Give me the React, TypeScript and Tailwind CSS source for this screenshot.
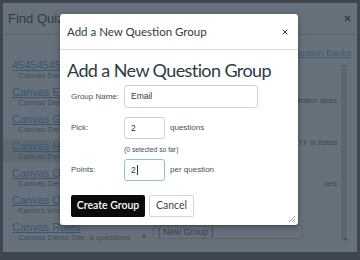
import { X } from 'lucide-react';

const rows = [
  { title: '454545454', sub: 'Canvas Demo Site, 4 questions' },
  { title: 'Canvas Email', sub: 'Canvas Demo Site, 6 questions' },
  { title: 'Canvas Grades', sub: 'Canvas Demo Site, 5 questions' },
  { title: 'Canvas Help', sub: 'Canvas Demo Site, 3 questions', active: true },
  { title: 'Canvas Quizzes', sub: 'Canvas Demo Site, 7 questions' },
  { title: 'Canvas Quizzes', sub: "Karen's Workspace, 2 questions" },
  { title: 'Canvas Roles', sub: 'Canvas Demo Site, 8 questions', last: true },
];

function Backdrop() {
  return (
    <div className="absolute inset-[3px] bottom-[8px] bg-[#67717c] text-[#2f3b48]">
      <div className="flex h-[32px] items-center justify-between border-b border-[#5a636d] px-[5px]">
        <span className="text-[13px]">Find Quiz Group</span>
        <X className="h-[9px] w-[9px] text-[#2f3742]" strokeWidth={3} />
      </div>
      <div className="absolute right-[6px] top-[44px] text-[9px] text-[#3f5a78] underline">Question Banks</div>
      <div className="absolute right-[20px] top-[92px] text-[8px] text-[#3c4650]">editor does</div>
      <div className="absolute right-[20px] top-[134px] text-[8px] text-[#3c4650]">TF is listed</div>
      <div className="absolute right-[20px] top-[175px] text-[8px] text-[#3c4650]">oes</div>
      <div className="absolute right-[10px] top-[62px] h-[175px] w-[6px] bg-[#5d666f]" />
      <div className="absolute left-[150px] top-[222px] h-[14px] w-[150px] rounded-[2px] border border-[#5a636d] px-[4px] text-[9px] leading-[12px] text-[#3c4650]">[ New Group ]</div>
      <div className="absolute left-[138px] top-[230px] text-[6px] text-[#3c4650]">▼</div>
      <div className="absolute right-[9px] top-[233px] text-[5px] text-[#3c4650]">▼</div>
      <div className="flex w-[150px] flex-col">
        {rows.map((r, i) => (
          <div
            key={i}
            className={`${i === 0 ? 'mt-[24px]' : 'mt-[5px]'} flex h-[22px] flex-col justify-center overflow-hidden px-[9px] ${r.last ? 'w-[150px]' : 'w-[57px]'} ${r.active ? 'bg-[#5f6973]' : ''}`}
          >
            <span className="whitespace-nowrap text-[11px] leading-[12px] text-[#3a5673] underline">{r.title}</span>
            <span className="whitespace-nowrap pl-[6px] text-[8px] leading-[10px] text-[#434d57]">{r.sub}</span>
          </div>
        ))}
      </div>
    </div>
  );
}

export default function App() {
  return (
    <div className="relative h-[260px] w-[360px] overflow-hidden bg-[#3f464f] font-['Liberation_Sans',Arial,sans-serif]">
      <Backdrop />
      <div className="absolute left-[60px] top-[14px] h-[211px] w-[238px] rounded-[3px] bg-white shadow-[0_2px_6px_rgba(0,0,0,0.35)]">
        <div className="flex h-[36px] items-center justify-between border-b border-[#d7dadd] pl-[7px] pr-[9px]">
          <span className="whitespace-nowrap font-['Lato',sans-serif] text-[11.5px] text-[#2d3b45]">Add a New Question Group</span>
          <X className="h-[8px] w-[8px] text-[#2d3b45]" strokeWidth={3} />
        </div>
        <div className="px-[7px] pt-[9px]">
          <h2 className="whitespace-nowrap font-['Lato',sans-serif] text-[18px] leading-[22px] tracking-[-0.6px] text-[#2d3b45]">Add a New Question Group</h2>
          <div className="mt-[4px] flex items-center gap-[5px] pl-[4px]">
            <span className="w-[48px] whitespace-nowrap text-[8px] text-[#44515c]">Group Name:</span>
            <div className="flex h-[23px] w-[134px] items-center rounded-[3px] border border-[#cfd3d6] px-[6px] text-[8.5px] text-[#2d3b45]">Email</div>
          </div>
          <div className="mt-[9px] flex items-center gap-[5px] pl-[4px]">
            <span className="w-[48px] text-[8px] text-[#44515c]">Pick:</span>
            <div className="flex h-[22px] w-[41px] items-center rounded-[3px] border border-[#cfd3d6] px-[6px] text-[8.5px] text-[#2d3b45]">2</div>
            <span className="whitespace-nowrap text-[8px] text-[#44515c]">questions</span>
          </div>
          <div className="mt-[6px] whitespace-nowrap pl-[57px] text-[6.8px] leading-[9px] text-[#44515c]">(0 selected so far)</div>
          <div className="mt-[5px] flex items-center gap-[5px] pl-[4px]">
            <span className="w-[48px] text-[8px] text-[#44515c]">Points:</span>
            <div className="flex h-[22px] w-[41px] items-center rounded-[3px] border border-[#8fc2d9] px-[6px] text-[8.5px] text-[#2d3b45]">
              2<span className="ml-[1px] h-[10px] w-px bg-[#2d3b45]" />
            </div>
            <span className="whitespace-nowrap text-[8px] text-[#44515c]">per question</span>
          </div>
          <div className="mt-[14px] flex gap-[4px] pl-[4px]">
            <button className="h-[22px] w-[74px] whitespace-nowrap rounded-[2px] bg-[#0b0b0b] font-['Lato',sans-serif] text-[10.5px] font-semibold text-white">Create Group</button>
            <button className="h-[22px] w-[45px] whitespace-nowrap rounded-[2px] border border-[#d3d6d9] bg-white font-['Lato',sans-serif] text-[10.5px] text-[#3b4650]">Cancel</button>
          </div>
        </div>
        <svg className="absolute bottom-[2px] right-[2px]" width="8" height="8" viewBox="0 0 8 8">
          <path d="M7 1 1 7M7 4 4 7M7 6 6 7" stroke="#8a9096" strokeWidth="0.8" />
        </svg>
      </div>
    </div>
  );
}
